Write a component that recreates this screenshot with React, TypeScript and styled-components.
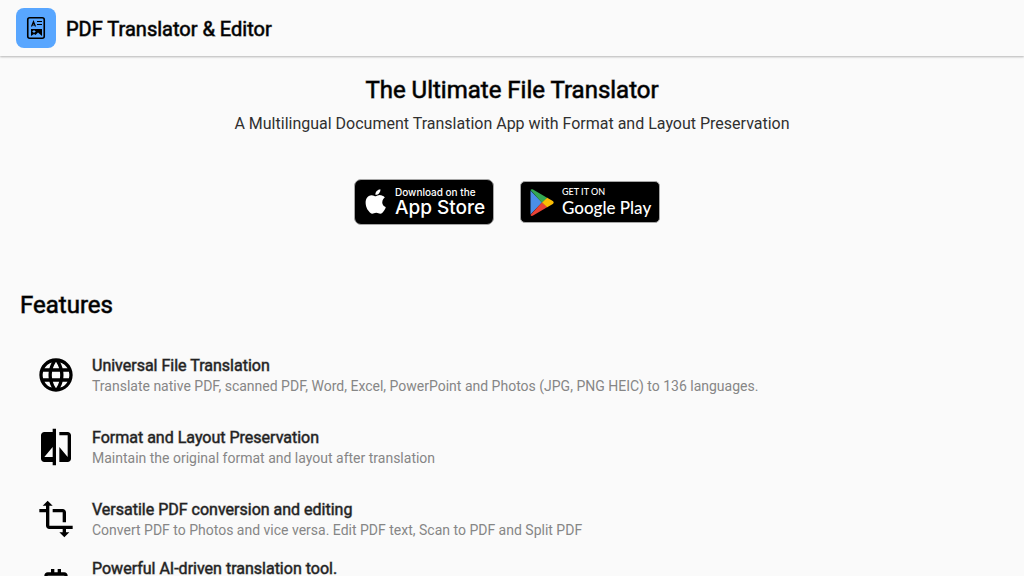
import React from "react";
import styled, { createGlobalStyle, css } from "styled-components";
import { MdLanguage, MdCompare, MdTransform, MdMemory } from "react-icons/md";
import type { IconType } from "react-icons";

const Global = createGlobalStyle`
  * { box-sizing: border-box; }
  body {
    margin: 0;
    background: #fafafa;
    color: #000;
    font-family: Roboto, "Liberation Sans", sans-serif;
  }
  h1, h2, h3, p, ul { margin: 0; padding: 0; }
`;

const thickened = css`
  font-weight: 400;
  -webkit-text-stroke: 1px rgba(0, 0, 0, 0.6);
`;

const Page = styled.div`
  height: 100vh;
  display: flex;
  flex-direction: column;
  overflow: hidden;
`;

const AppBar = styled.header`
  flex: none;
  height: 56px;
  padding: 0 16px;
  display: flex;
  align-items: center;
  gap: 10px;
  background: #fafafa;
  box-shadow: 0 1px 2px rgba(0, 0, 0, 0.28);
`;

const Logo = styled.svg`
  width: 40px;
  height: 40px;
  display: block;
`;

const AppTitle = styled.h1`
  padding-top: 2px;
  font-size: 20px;
  line-height: 24px;
  ${thickened}
`;

const Content = styled.main`
  flex: 1;
  min-height: 0;
  overflow: hidden;
`;

const Hero = styled.section`
  padding: 20px 20px 0;
  display: flex;
  flex-direction: column;
  align-items: center;
  text-align: center;
`;

const Heading = styled.h2`
  font-size: 24px;
  line-height: 28px;
  ${thickened}
`;

const Tagline = styled.p`
  margin-top: 10px;
  font-size: 16px;
  line-height: 19px;
  color: #303030;
`;

const Stores = styled.div`
  margin-top: 46px;
  padding-right: 10px;
  display: flex;
  align-items: center;
  gap: 26px;
`;

const Badge = styled.a<{ $height: number; $radius: number }>`
  width: 140px;
  height: ${(p) => p.$height}px;
  padding-left: 9px;
  display: flex;
  align-items: center;
  gap: 8px;
  border: 1px solid #a6a6a6;
  border-radius: ${(p) => p.$radius}px;
  background: #000;
  color: #fff;
  text-align: left;
  text-decoration: none;

  svg { flex: none; }
`;

const BadgeText = styled.span<{ $family: string }>`
  display: flex;
  flex-direction: column;
  font-family: ${(p) => p.$family}, Roboto, sans-serif;
  font-weight: 500;
  white-space: nowrap;
`;

const BadgeSmall = styled.span<{ $size: number }>`
  font-size: ${(p) => p.$size}px;
  line-height: 12px;
`;

const BadgeLarge = styled.span<{ $size: number }>`
  font-size: ${(p) => p.$size}px;
  line-height: 20px;
`;

const Features = styled.section`
  padding: 66px 20px 0;
`;

const List = styled.ul`
  margin-top: 20px;
  list-style: none;
`;

const Item = styled.li<{ $compact: boolean }>`
  min-height: ${(p) => (p.$compact ? 58 : 72)}px;
  padding: 0 16px;
  display: flex;
  align-items: center;
  gap: 16px;

  svg { flex: none; }
`;

const ItemBody = styled.div<{ $compact: boolean }>`
  align-self: ${(p) => (p.$compact ? "flex-start" : "center")};
  padding-top: ${(p) => (p.$compact ? 4 : 2)}px;
`;

const ItemTitle = styled.h3`
  font-size: 16px;
  line-height: 20px;
  font-weight: 400;
  color: #212121;
  -webkit-text-stroke: 1px rgba(33, 33, 33, 0.5);
`;

const ItemText = styled.p`
  font-size: 14px;
  line-height: 20px;
  color: #868686;
`;

type Feature = { icon: IconType; title: string; text?: string };

const features: Feature[] = [
  { icon: MdLanguage, title: "Universal File Translation", text: "Translate native PDF, scanned PDF, Word, Excel, PowerPoint and Photos (JPG, PNG HEIC) to 136 languages." },
  { icon: MdCompare, title: "Format and Layout Preservation", text: "Maintain the original format and layout after translation" },
  { icon: MdTransform, title: "Versatile PDF conversion and editing", text: "Convert PDF to Photos and vice versa. Edit PDF text, Scan to PDF and Split PDF" },
  { icon: MdMemory, title: "Powerful AI-driven translation tool." },
];

const LogoMark = () => (
  <Logo viewBox="0 0 40 40" aria-hidden="true">
    <rect width="40" height="40" rx="8" fill="#58a6ff" />
    <rect x="11.750" y="9.750" width="16.500" height="20.500" rx="2" fill="none" stroke="#000" strokeWidth="1.600" />
    <path d="M15.500 18.500l2-5 2 5M16.300 17h2.500M21 13.500h5M21 16.500h5" fill="none" stroke="#000" strokeWidth="1.100" />
    <path d="M15 21h11v7l-4-3.500-2.500 2.500-1.500-1-3 2z" />
    <path d="M18 22v3M16.500 23.500h3" stroke="#58a6ff" strokeWidth="1" />
  </Logo>
);

const AppleMark = () => (
  <svg width="23" height="28" viewBox="0 0 23 28" fill="#fff" aria-hidden="true">
    <path d="M18.200 13.800c0-2.500 2-3.700 2.100-3.800-1.200-1.700-3-1.900-3.600-1.900-1.500-.2-3 .9-3.700.9-.8 0-2-.9-3.200-.9-1.700 0-3.200 1-4.100 2.400-1.700 3-.4 7.500 1.300 9.900.8 1.200 1.800 2.600 3.100 2.500 1.300 0 1.700-.8 3.300-.8 1.500 0 1.900.8 3.200.8 1.400 0 2.200-1.200 3-2.400 1-1.400 1.400-2.700 1.400-2.800 0 0-2.800-1-2.800-3.900zM15.700 6.500c.7-.9 1.200-2 1-3.200-1 0-2.200.7-2.900 1.500-.7.7-1.200 1.900-1.100 3 1.200.1 2.300-.5 3-1.300z" transform="translate(-4.500 -3) scale(1.250)" />
  </svg>
);

const PlayMark = () => (
  <svg width="24" height="27" viewBox="0 0 24 27" aria-hidden="true">
    <path d="M.5 1.500v24L12 13.500z" fill="#4a8fe8" />
    <path d="M.5 1C1 0 2 0 3 .6L17.500 9 12 13.800z" fill="#34a853" />
    <path d="M.5 26c.6 1 1.600 1.200 2.600.5L17.500 18 12 13.300z" fill="#ea4335" />
    <path d="M17.200 8.800l5.600 3.300c1.200.7 1.200 2.200 0 2.900l-5.600 3.300-5.200-4.800z" fill="#fbbc04" />
  </svg>
);

export default function App() {
  return (
    <>
      <Global />
      <Page>
        <AppBar>
          <LogoMark />
          <AppTitle>PDF Translator &amp; Editor</AppTitle>
        </AppBar>
        <Content>
          <Hero>
            <Heading>The Ultimate File Translator</Heading>
            <Tagline>A Multilingual Document Translation App with Format and Layout Preservation</Tagline>
            <Stores>
              <Badge href="#app-store" $height={46} $radius={7}>
                <AppleMark />
                <BadgeText $family="Inter">
                  <BadgeSmall $size={10}>Download on the</BadgeSmall>
                  <BadgeLarge $size={19}>App Store</BadgeLarge>
                </BadgeText>
              </Badge>
              <Badge href="#google-play" $height={42} $radius={5}>
                <PlayMark />
                <BadgeText $family="Lato">
                  <BadgeSmall $size={9}>GET IT ON</BadgeSmall>
                  <BadgeLarge $size={17}>Google Play</BadgeLarge>
                </BadgeText>
              </Badge>
            </Stores>
          </Hero>
          <Features>
            <Heading>Features</Heading>
            <List>
              {features.map(({ icon: Icon, title, text }) => (
                <Item key={title} $compact={!text}>
                  <Icon size={40} aria-hidden="true" />
                  <ItemBody $compact={!text}>
                    <ItemTitle>{title}</ItemTitle>
                    {text && <ItemText>{text}</ItemText>}
                  </ItemBody>
                </Item>
              ))}
            </List>
          </Features>
        </Content>
      </Page>
    </>
  );
}
